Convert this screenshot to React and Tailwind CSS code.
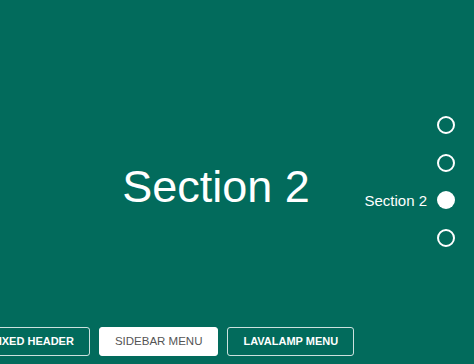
export default function App() {
  const font = { fontFamily: '"Liberation Sans", Arial, sans-serif' };
  return (
    <div className="relative w-[474px] h-[364px] overflow-hidden bg-[#026b5c] text-white" style={font}>
      <div className="flex h-full w-full flex-col">
        <div className="flex flex-1 items-center justify-center pr-[42px] pt-[46px]">
          <h1 className="text-[45px] leading-none font-normal">Section 2</h1>
        </div>
        <div className="flex items-center gap-[9px] pb-[8px] -ml-[24px]">
          <button className="h-[29px] rounded-[3px] border border-white/80 px-[15px] text-[11px] font-bold uppercase text-white whitespace-nowrap">Fixed header</button>
          <button className="h-[29px] rounded-[3px] border border-white bg-white px-[15px] text-[11.5px] font-normal uppercase text-[#555] whitespace-nowrap">Sidebar menu</button>
          <button className="h-[29px] rounded-[3px] border border-white/80 px-[15px] text-[11px] font-bold uppercase text-white whitespace-nowrap">Lavalamp menu</button>
        </div>
      </div>
      <ul className="absolute right-[19px] top-[116px] flex flex-col items-end gap-[19.5px]">
        <li className="flex h-[18px] items-center"><span className="block h-[18px] w-[18px] rounded-full border-2 border-white"></span></li>
        <li className="flex h-[18px] items-center"><span className="block h-[18px] w-[18px] rounded-full border-2 border-white"></span></li>
        <li className="flex h-[18px] items-center gap-[10px]">
          <span className="text-[15px] leading-none">Section 2</span>
          <span className="block h-[18px] w-[18px] rounded-full bg-white"></span>
        </li>
        <li className="flex h-[18px] items-center"><span className="block h-[18px] w-[18px] rounded-full border-2 border-white"></span></li>
      </ul>
    </div>
  );
}
